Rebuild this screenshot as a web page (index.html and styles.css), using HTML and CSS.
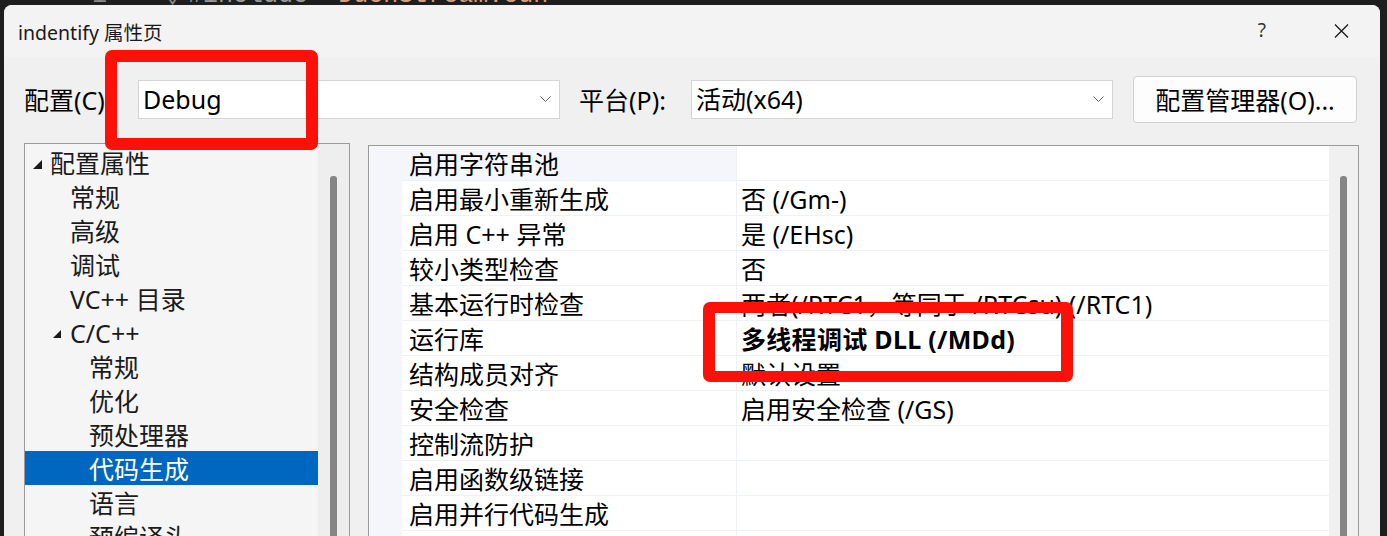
FILE: index.html
```html
<!DOCTYPE html>
<html lang="zh-CN">
<head>
<meta charset="utf-8">
<title>indentify 属性页</title>
<link rel="stylesheet" href="styles.css">
</head>
<body>
<div class="code-strip">
  <div class="code-line"><span class="ln">1</span><span class="fold">⌄</span><span class="pp">#include</span> <span class="str">"DuchStream.cuh"</span></div>
</div>
<div class="dialog">
  <div class="titlebar">
    <span class="title">indentify 属性页</span>
    <span class="help">?</span>
    <svg class="close" width="15" height="14" viewBox="0 0 15 14"><path d="M1 0.5 L14 13.5 M14 0.5 L1 13.5" stroke="#1a1a1a" stroke-width="1.3" fill="none"/></svg>
  </div>
  <div class="config-row">
    <span class="cfg-label">配置(C)</span>
    <div class="combo"><span>Debug</span><svg width="11" height="6" viewBox="0 0 11 6"><path d="M0.5 0.5 L5.5 5.5 L10.5 0.5" stroke="#606060" stroke-width="1" fill="none"/></svg></div>
    <span class="cfg-label cfg-label2">平台(P):</span>
    <div class="combo"><span>活动(x64)</span><svg width="11" height="6" viewBox="0 0 11 6"><path d="M0.5 0.5 L5.5 5.5 L10.5 0.5" stroke="#606060" stroke-width="1" fill="none"/></svg></div>
    <div class="btn">配置管理器(O)...</div>
  </div>
  <div class="panes">
    <div class="tree">
      <ul class="tree-list">
        <li class="node lvl1"><span class="exp"><svg width="9" height="9" viewBox="0 0 9 9"><path d="M9 0 L9 9 L0 9 Z" fill="#1a1a1a"/></svg></span>配置属性</li>
        <li class="node lvl2">常规</li>
        <li class="node lvl2">高级</li>
        <li class="node lvl2">调试</li>
        <li class="node lvl2">VC++ 目录</li>
        <li class="node lvl2x"><span class="exp"><svg width="8" height="8" viewBox="0 0 8 8"><path d="M8 0 L8 8 L0 8 Z" fill="#1a1a1a"/></svg></span>C/C++</li>
        <li class="node lvl3">常规</li>
        <li class="node lvl3">优化</li>
        <li class="node lvl3">预处理器</li>
        <li class="node lvl3 selected">代码生成</li>
        <li class="node lvl3">语言</li>
        <li class="node lvl3">预编译头</li>
      </ul>
      <div class="vscroll tree-scroll"><div class="thumb"></div></div>
    </div>
    <div class="grid">
      <div class="grid-body">
        <div class="margin-col"></div>
        <div class="rows">
          <div class="row hover"><div class="name">启用字符串池</div><div class="value"></div></div>
          <div class="row"><div class="name">启用最小重新生成</div><div class="value">否 (/Gm-)</div></div>
          <div class="row"><div class="name">启用 C++ 异常</div><div class="value">是 (/EHsc)</div></div>
          <div class="row"><div class="name">较小类型检查</div><div class="value">否</div></div>
          <div class="row"><div class="name">基本运行时检查</div><div class="value">两者(/RTC1，等同于 /RTCsu) (/RTC1)</div></div>
          <div class="row"><div class="name">运行库</div><div class="value bold">多线程调试 DLL (/MDd)</div></div>
          <div class="row"><div class="name">结构成员对齐</div><div class="value">默认设置</div></div>
          <div class="row"><div class="name">安全检查</div><div class="value">启用安全检查 (/GS)</div></div>
          <div class="row"><div class="name">控制流防护</div><div class="value"></div></div>
          <div class="row"><div class="name">启用函数级链接</div><div class="value"></div></div>
          <div class="row"><div class="name">启用并行代码生成</div><div class="value"></div></div>
          <div class="row"><div class="name">启用增强指令集</div><div class="value"></div></div>
        </div>
      </div>
      <div class="vscroll grid-scroll"><div class="thumb"></div></div>
    </div>
  </div>
</div>
<div class="mark mark-config"></div>
<div class="mark mark-runtime"></div>
</body>
</html>
```

FILE: styles.css
```css
html, body {
  margin: 0;
  padding: 0;
}
body {
  width: 1387px;
  height: 536px;
  overflow: hidden;
  background: #1e1e1e;
  font-family: "Noto Sans", "Noto Sans CJK SC", sans-serif;
  color: #000;
  position: relative;
}

/* dark editor strip behind the dialog */
.code-strip {
  height: 5px;
  overflow: hidden;
}
.code-line {
  font-family: "Liberation Mono", monospace;
  font-size: 25px;
  line-height: 30px;
  margin-top: -19px;
  white-space: pre;
  padding-left: 92px;
}
.code-line .ln { color: #8a8a8a; margin-right: 58px; }
.code-line .fold { color: #8a8a8a; margin-right: 8px; }
.code-line .pp { color: #9b9b9b; }
.code-line .str { color: #d69d85; }

.dialog {
  margin-left: 4px;
  width: 1376px;
  height: 531px;
  background: #f0f0f0;
  border-radius: 8px 8px 0 0;
  overflow: hidden;
  box-sizing: border-box;
}

.titlebar {
  height: 52px;
  display: flex;
  align-items: center;
  padding-left: 14px;
  background: #f3f3f3;
}
.title {
  font-size: 19.5px;
  color: #1a1a1a;
}
.help {
  margin-left: auto;
  margin-right: 68px;
  font-size: 19px;
  color: #333;
  margin-top: -2px;
}
.close {
  margin-right: 31px;
  margin-top: -1px;
}

.config-row {
  height: 84px;
  display: flex;
  align-items: center;
  padding-left: 20px;
  font-size: 25px;
}
.cfg-label {
  width: 114px;
  white-space: nowrap;
}
.cfg-label2 {
  margin-left: 19px;
  width: 112px;
}
.combo {
  width: 422px;
  height: 39px;
  box-sizing: border-box;
  border: 1px solid #d4d4d4;
  background: #fff;
  display: flex;
  align-items: center;
  justify-content: space-between;
  padding-left: 4px;
  padding-right: 8px;
  line-height: 36px;
}
.btn {
  margin-left: 20px;
  width: 224px;
  height: 47px;
  box-sizing: border-box;
  border: 1px solid #d0d0d0;
  border-radius: 4px;
  background: #fdfdfd;
  display: flex;
  align-items: center;
  justify-content: center;
  white-space: nowrap;
}

.panes {
  display: flex;
  align-items: flex-start;
  padding-left: 20px;
  padding-top: 2px;
}

.tree {
  width: 326px;
  height: 400px;
  box-sizing: border-box;
  border: 1px solid #9a9a9a;
  border-bottom: none;
  background: #f5f5f5;
  display: flex;
}
.tree-list {
  list-style: none;
  margin: 0;
  padding: 1px 0 0 0;
  width: 293px;
  font-size: 25px;
  color: #1b1b1b;
}
.node {
  height: 34px;
  box-sizing: border-box;
  padding-top: 2px;
  line-height: 32px;
  display: flex;
  align-items: center;
  white-space: nowrap;
}
.exp {
  width: 17px;
  display: flex;
  align-items: center;
  padding-top: 2px;
}
.lvl1 { padding-left: 8px; }
.lvl2 { padding-left: 45px; }
.lvl2x { padding-left: 28px; }
.lvl3 { padding-left: 64px; }
.node.selected {
  background: #0067c0;
  color: #fff;
}

.vscroll {
  background: #eeeeee;
}
.vscroll .thumb {
  width: 7px;
  height: 400px;
  background: #858585;
  border-radius: 3px 3px 0 0;
}
.tree-scroll {
  width: 31px;
}
.tree-scroll .thumb {
  margin-left: 12px;
  margin-top: 32px;
}

.grid {
  margin-left: 18px;
  margin-top: 2px;
  width: 991px;
  height: 400px;
  box-sizing: border-box;
  border: 1px solid #9a9a9a;
  border-bottom: none;
  display: flex;
  background: #fff;
}
.grid-body {
  flex: 1;
  display: flex;
}
.margin-col {
  width: 33px;
  background: #f4f6fb;
}
.rows {
  flex: 1;
  font-size: 25px;
}
.row {
  height: 35px;
  box-sizing: border-box;
  border-bottom: 1px solid #eef1f6;
  display: flex;
  line-height: 32px;
  white-space: nowrap;
}
.name {
  width: 335px;
  box-sizing: border-box;
  border-right: 1px solid #eef1f6;
  padding-left: 7px;
  padding-top: 2px;
}
.row.hover .name {
  background: #f4f6fb;
}
.value {
  flex: 1;
  padding-left: 4px;
  padding-top: 2px;
  overflow: hidden;
}
.value.bold {
  font-weight: 700;
  letter-spacing: 0.3px;
}
.grid-scroll {
  width: 29px;
  background: #f0f0f0;
}
.grid-scroll .thumb {
  margin-left: 11px;
  margin-top: 30px;
}

/* red annotation rectangles drawn over the screenshot */
.mark {
  position: absolute;
  box-sizing: border-box;
  border: 12px solid #fd1008;
  border-radius: 7px;
}
.mark-config {
  left: 105px;
  top: 50px;
  width: 213px;
  height: 100px;
}
.mark-runtime {
  left: 703px;
  top: 302px;
  width: 370px;
  height: 80px;
  border-top-width: 11px;
  border-bottom-width: 11px;
}
```
